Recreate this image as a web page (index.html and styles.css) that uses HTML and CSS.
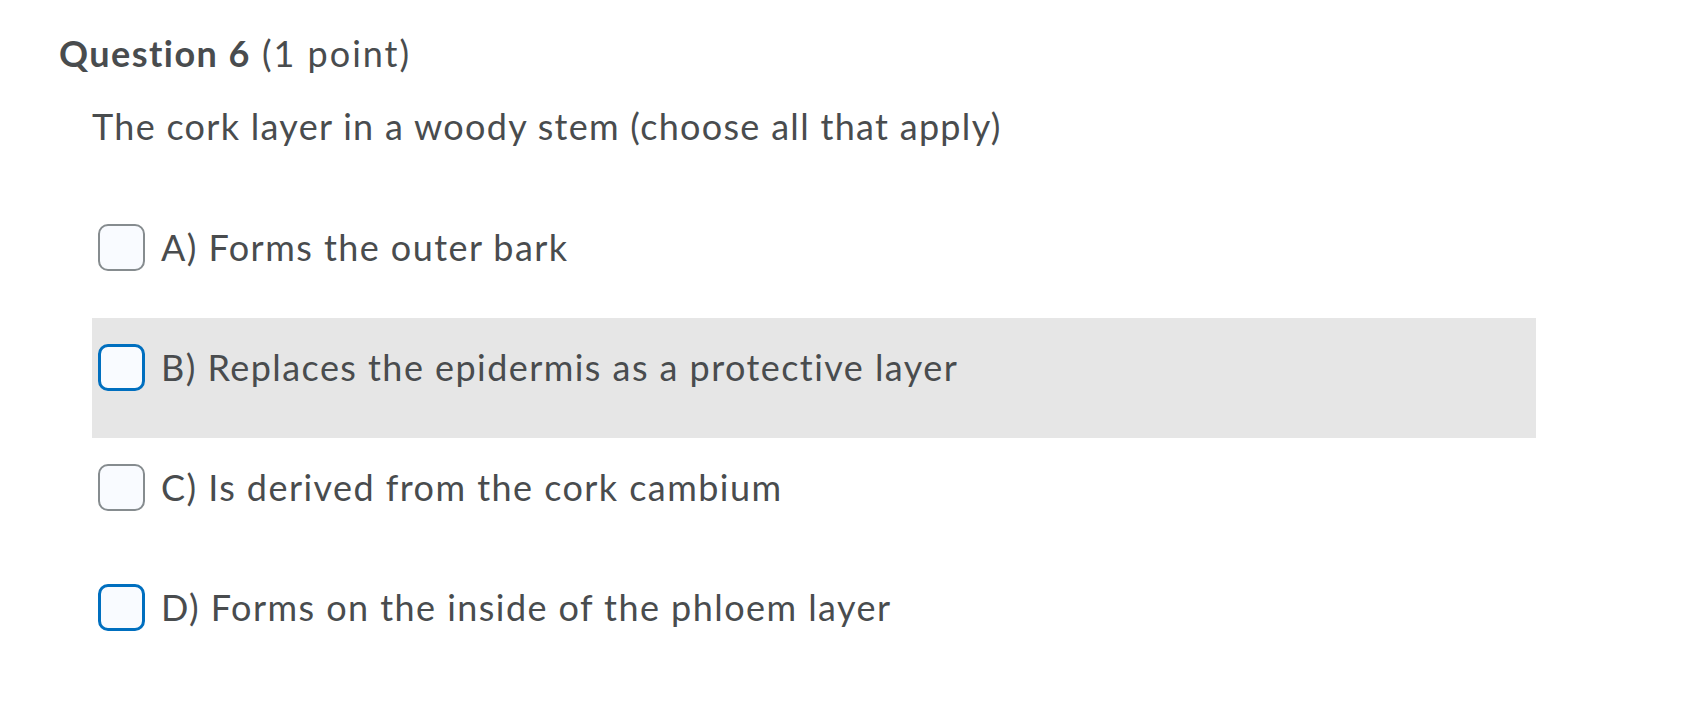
FILE: index.html
```html
<!DOCTYPE html>
<html lang="en">
<head>
<meta charset="utf-8">
<title>Question 6</title>
<link rel="stylesheet" href="styles.css">
</head>
<body>
<div class="question">
  <h2 class="q-title"><span class="q-num">Question 6</span> (1 point)</h2>
  <p class="q-text">The cork layer in a woody stem (choose all that apply)</p>
  <ul class="options">
    <li class="option"><span class="box"></span><span class="label">A) Forms the outer bark</span></li>
    <li class="option hover"><span class="box focus"></span><span class="label">B) Replaces the epidermis as a protective layer</span></li>
    <li class="option"><span class="box"></span><span class="label">C) Is derived from the cork cambium</span></li>
    <li class="option"><span class="box focus"></span><span class="label">D) Forms on the inside of the phloem layer</span></li>
  </ul>
</div>
</body>
</html>
```
FILE: styles.css
```css
html, body {
  margin: 0;
  padding: 0;
  background: #ffffff;
}
body {
  font-family: Lato, "Open Sans", "Liberation Sans", sans-serif;
  color: #494c4e;
  font-variant-ligatures: none;
  font-feature-settings: "liga" 0, "clig" 0;
}
.question {
  padding: 32px 0 0 59px;
  width: 1477px;
}
.q-title {
  margin: 0;
  font-size: 36px;
  line-height: 1.2;
  font-weight: 400;
  letter-spacing: 0.055em;
}
.q-num {
  font-weight: 700;
  letter-spacing: 0.04em;
}
.q-text {
  margin: 30px 0 0 33px;
  font-size: 36px;
  line-height: 1.2;
  letter-spacing: 0.036em;
}
.options {
  list-style: none;
  margin: 50px 0 0 33px;
  padding: 0;
}
.option {
  display: flex;
  align-items: flex-start;
  height: 120px;
  box-sizing: border-box;
  padding: 26px 10px 0 6px;
}
.option.hover {
  background: #e6e6e6;
}
.box {
  flex: none;
  width: 47px;
  height: 47px;
  box-sizing: border-box;
  border: 2px solid #868c8f;
  border-radius: 10px;
  background: #f9fbff;
}
.box.focus {
  border: 3px solid #006fbf;
}
.label {
  margin-left: 16px;
  font-size: 36px;
  line-height: 47px;
  letter-spacing: 0.04em;
}
```
